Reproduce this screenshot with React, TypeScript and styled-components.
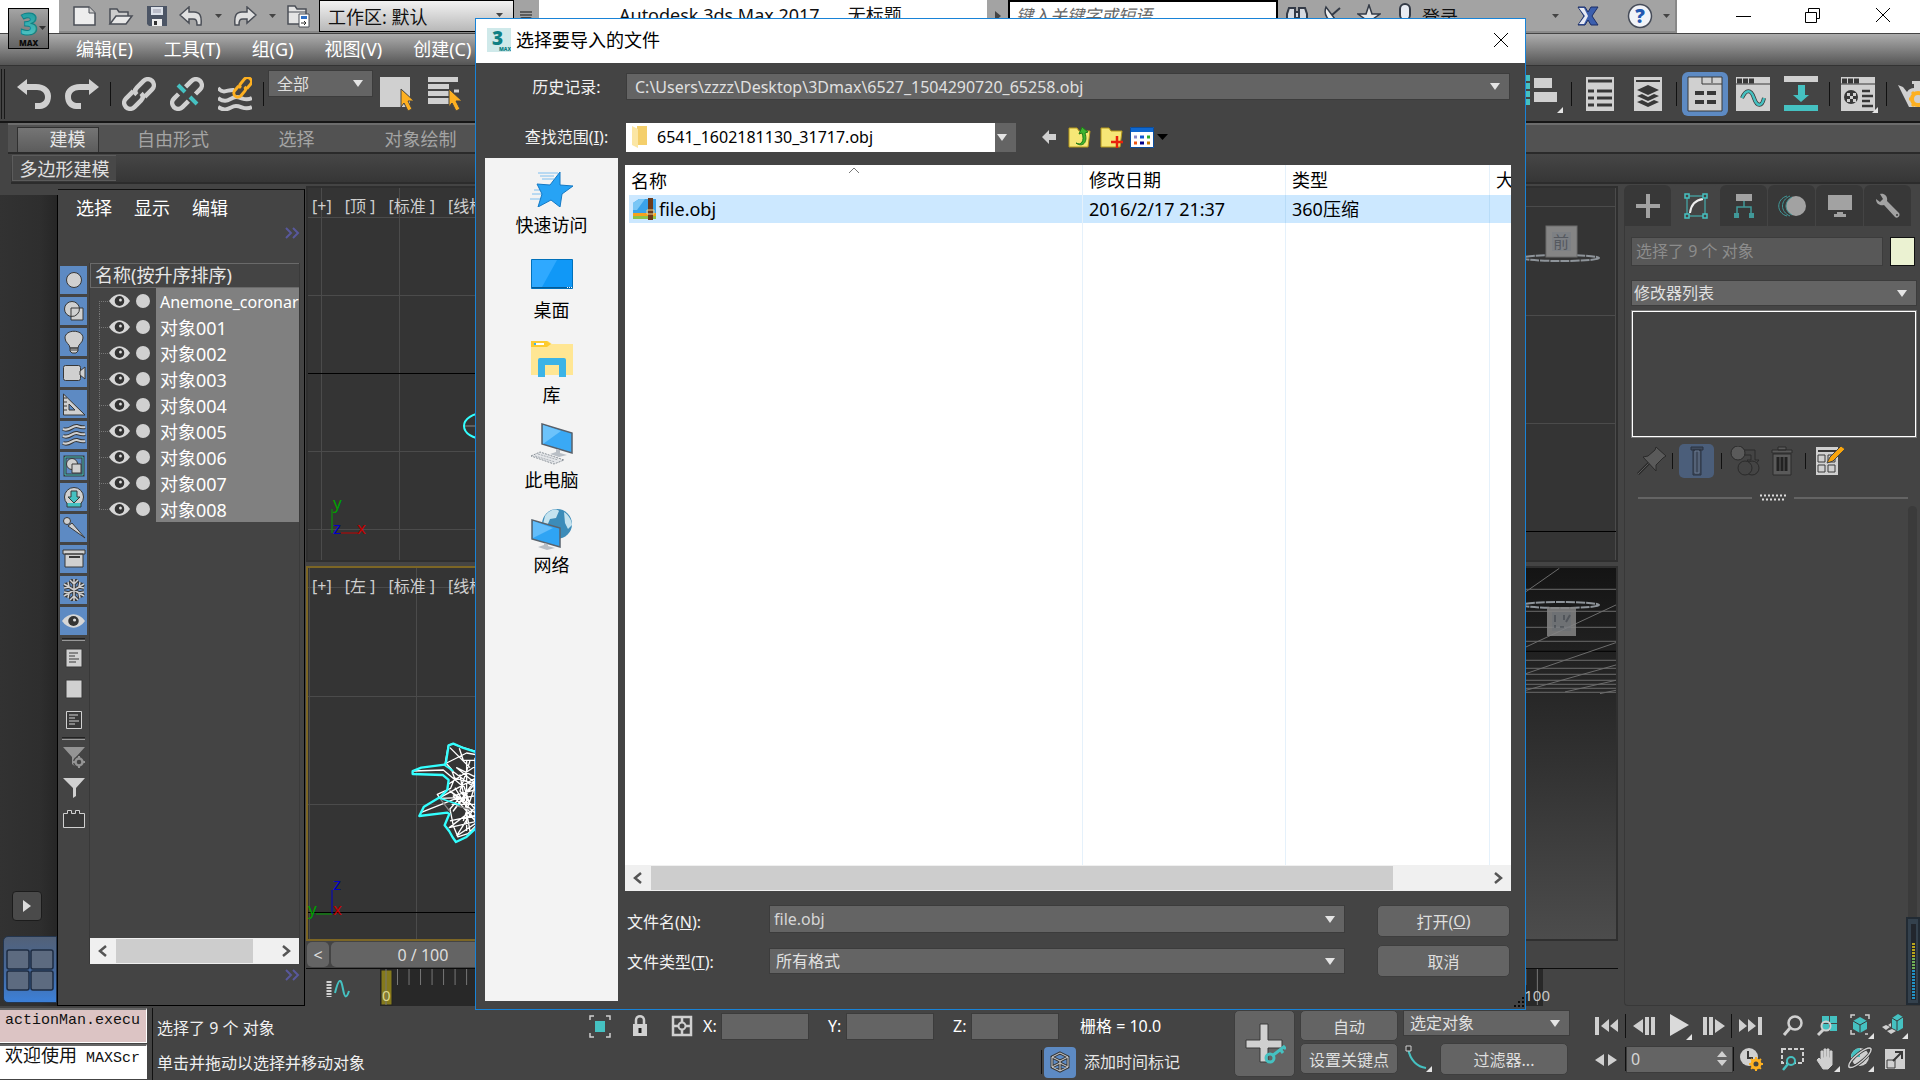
import React from "react";
import styled, { createGlobalStyle, css } from "styled-components";

const LIGHT = "#d0d0d0";
const CYAN = "#45c1c1";
const ORANGE = "#fdb021";
const FACE = "#444444";
const FIELD = "#646464";
const INK = "#383838";

const Global = createGlobalStyle`
  * { box-sizing: border-box; }
  body { margin: 0; background: ${FACE}; overflow: hidden; }
  body, button, input, select, textarea {
    font-family: "Noto Sans", "Noto Sans CJK SC", sans-serif;
  }
  button { margin: 0; padding: 0; border: 0; background: none; color: inherit; font-size: inherit; }
  svg { display: block; flex: none; }
`;

/* ---------- shared parts ---------- */

const Shell = styled.div`
  position: relative;
  display: flex;
  flex-direction: column;
  min-height: 100vh;
  background: ${FACE};
  color: #e6e6e6;
  font-size: 16px;
  line-height: 24px;
  white-space: nowrap;
`;

const Stack = styled.div<{ $w?: number; $grow?: boolean }>`
  display: grid;
  align-items: center;
  flex: ${(p) => (p.$grow ? "1" : "none")};
  width: ${(p) => (p.$w ? `${p.$w}px` : "auto")};
  min-width: 0;
  > * { grid-area: 1 / 1; }
  > svg { justify-self: end; pointer-events: none; }
`;

const Select = styled.select<{ $h?: number; $pad?: number; $size?: number }>`
  appearance: none;
  width: 100%;
  height: ${(p) => p.$h ?? 26}px;
  padding: 0 28px 0 ${(p) => p.$pad ?? 9}px;
  border: 1px solid #3c3c3c;
  border-radius: 0;
  background: ${FIELD};
  color: #e0e0e0;
  font-size: ${(p) => p.$size ?? 16}px;
`;

const Field = styled.input<{ $h?: number; $dim?: boolean; $size?: number }>`
  width: 100%;
  min-width: 0;
  height: ${(p) => p.$h ?? 26}px;
  padding: 0 4px ${(p) => (p.$dim ? 4 : 0)}px;
  border: 1px solid #3c3c3c;
  background: ${(p) => (p.$dim ? "#585858" : FIELD)};
  color: ${(p) => (p.$dim ? "#8c8c8c" : "#d6d6d6")};
  font-size: ${(p) => p.$size ?? 16}px;
`;

const PushButton = styled.button`
  display: flex;
  align-items: center;
  justify-content: center;
  height: 32px;
  border: 1px solid #3e3e3e;
  border-radius: 5px;
  background: ${FIELD};
  color: #dedede;
  font-size: 16px;
`;

const Down = ({ pad = 10 }: { pad?: number }) => (
  <svg width={10 + pad} height="9" viewBox={`0 0 ${10 + pad} 9`}>
    <path d="M0 1h10l-5 7z" fill="#e4e4e4" />
  </svg>
);

const Sep = styled.i<{ $h?: number }>`
  flex: none;
  width: 1px;
  height: ${(p) => p.$h ?? 24}px;
  background: #111;
`;

type IconProps = { w: number; h: number; children: React.ReactNode };
const Icon = ({ w, h, children }: IconProps) => (
  <svg width={w} height={h} viewBox={`0 0 ${w} ${h}`} fill="none" aria-hidden="true">
    {children}
  </svg>
);

/* ---------- title bar ---------- */

const TitleBar = styled.header`
  display: flex;
  height: 34px;
  background: #fff;
  color: #111;
  font-size: 18px;
  border-bottom: 1px solid #444;
`;
const AppSlot = styled.div`
  width: 59px;
  padding: 8px 0 0 8px;
  flex: none;
`;
const AppButton = styled.button`
  position: relative;
  z-index: 1;
  display: block;
  width: 41px;
  height: 41px;
  border: 1px solid #000;
  background: linear-gradient(#a4a4a4, #636363);
`;
const QuickAccess = styled.div`
  display: flex;
  align-items: center;
  flex: none;
  width: 480px;
  padding-left: 13px;
  background: #a3a3a3;
  border-bottom: 2px solid #8a8a8a;
`;
const QuickButton = styled.button<{ $w: number }>`
  display: flex;
  align-items: center;
  justify-content: center;
  flex: none;
  width: ${(p) => p.$w}px;
  height: 30px;
`;
const Workspace = styled(Select)`
  padding-top: 2px;
  border: 1px solid #000;
  background: linear-gradient(#f2f2f2, #b8b8b8);
  color: #111;
`;
const Caption = styled.h1`
  display: flex;
  gap: 28px;
  flex: 1;
  margin: 0;
  padding: 3px 0 0 80px;
  font-size: 18px;
  font-weight: 400;
`;
const InfoCenter = styled.div`
  display: flex;
  align-items: center;
  flex: none;
  width: 690px;
  background: #a3a3a3;
  border-right: 2px solid #888;
  border-bottom: 2px solid #8a8a8a;
`;
const SearchBox = styled.input`
  flex: none;
  width: 270px;
  height: 32px;
  padding: 0 6px;
  border: 2px solid #000;
  background: #fff;
  font-size: 17px;
  font-style: italic;
  &::placeholder { color: #666; opacity: 1; }
`;
const SignIn = styled.button`
  width: 130px;
  text-align: left;
  font-size: 18px;
`;
const WindowButtons = styled.div`
  display: flex;
  flex: none;
  width: 243px;
  justify-content: space-between;
  padding: 0 22px 0 51px;
`;

const smallDown = <path d="M0 0h7l-3.500 4z" fill="#444" />;

function TitleIcons() {
  return (
    <QuickAccess>
      <QuickButton $w={26} aria-label="新建">
        <Icon w={26} h={22}><path d="M2 2h15l6 6v12H2z" fill="#ededed" stroke="#4b4f57" strokeWidth="1.500" /><path d="M17 2v6h6" stroke="#4b4f57" fill="#ccc" /></Icon>
      </QuickButton>
      <QuickButton $w={46} aria-label="打开">
        <Icon w={26} h={20}><path d="M2 18V3h7l2 3h9v4" fill="#ccc" stroke="#4b4f57" strokeWidth="1.500" /><path d="M2 18l6-8h16l-6 8z" fill="#e8e8e8" stroke="#4b4f57" strokeWidth="1.500" /></Icon>
      </QuickButton>
      <QuickButton $w={26} aria-label="保存">
        <Icon w={22} h={22}><path d="M1 1h20v20H3l-2-2z" fill="#4c5565" /><path d="M5 2h12v8H5z" fill="#dde2ea" /><path d="M6 14h10v7H6z" fill="#eee" /><path d="M8 16h3v4H8z" fill="#333" /><path d="M7 5h8M7 7h8" stroke="#99a" /></Icon>
      </QuickButton>
      <QuickButton $w={42} aria-label="撤消">
        <Icon w={24} h={20}><path d="M1 9l9-8v5h5c6 0 8 4 7 13h-4c0-5-1-6-4-6h-4v4z" fill="#e0e0e0" stroke="#4b4f57" strokeWidth="1.500" /></Icon>
      </QuickButton>
      <QuickButton $w={12} aria-label="撤消列表"><Icon w={7} h={4}>{smallDown}</Icon></QuickButton>
      <QuickButton $w={42} aria-label="重做">
        <Icon w={24} h={20}><path d="M23 9l-9-8v5H9C3 6 1 10 2 19h4c0-5 1-6 4-6h4v4z" fill="#e0e0e0" stroke="#4b4f57" strokeWidth="1.500" /></Icon>
      </QuickButton>
      <QuickButton $w={12} aria-label="重做列表"><Icon w={7} h={4}>{smallDown}</Icon></QuickButton>
      <QuickButton $w={41} aria-label="项目文件夹">
        <Icon w={25} h={24}><path d="M2 20V2h7l2 3h9v15z" fill="#e4e4e4" stroke="#4b4f57" strokeWidth="1.500" /><path d="M2 8h18" stroke="#4b4f57" /><path d="M13 10h10v13H13z" fill="#fff" stroke="#4b4f57" /><path d="M15 12h6v3h-6z" fill="#2f6fc4" /><path d="M15 19h5m-2-2l2 2-2 2" stroke="#333" /></Icon>
      </QuickButton>
      <Stack $w={195}>
        <Workspace $h={32} $size={18} $pad={8} aria-label="工作区"><option>工作区: 默认</option></Workspace>
        <Icon w={18} h={5}>{smallDown}</Icon>
      </Stack>
      <QuickButton $w={24} aria-label="自定义"><Icon w={12} h={10}><path d="M0 1h12M0 4h12" stroke="#444" strokeWidth="1.500" /><path d="M0 6h12l-6 4z" fill="#444" /></Icon></QuickButton>
    </QuickAccess>
  );
}

function Title() {
  return (
    <TitleBar>
      <AppSlot>
        <AppButton aria-label="应用程序菜单">
          <svg width="39" height="39" viewBox="0 0 39 39">
            <defs><linearGradient id="teal" x1="0" y1="0" x2="0" y2="1"><stop offset="0" stopColor="#0f8e92" /><stop offset="1" stopColor="#5fd0cf" /></linearGradient></defs>
            <text x="11" y="26" fontFamily="Noto Sans" fontWeight="900" fontSize="30" fill="url(#teal)" stroke="#0d8185">3</text>
            <text x="10" y="37" fontFamily="Open Sans, sans-serif" fontWeight="800" fontSize="8" fill="#0b0b0b">MAX</text>
            <path d="M30 17h7l-3.500 4z" fill="#333" />
          </svg>
        </AppButton>
      </AppSlot>
      <TitleIcons />
      <Caption><span>Autodesk 3ds Max 2017</span><span>无标题</span></Caption>
      <InfoCenter>
        <QuickButton $w={21} aria-label="收拢"><Icon w={8} h={12}><path d="M1 1l6 5-6 5z" fill="#444" /></Icon></QuickButton>
        <SearchBox placeholder="键入关键字或短语" aria-label="搜索" />
        <QuickButton $w={38} aria-label="查找"><Icon w={22} h={22}><path d="M3 3h6v17H1V9zM13 3h6l2 6v11h-8zM9 7h4v6H9z" fill="#d5d9df" stroke="#333a46" strokeWidth="2" /></Icon></QuickButton>
        <QuickButton $w={34} aria-label="通讯中心"><Icon w={20} h={22}><path d="M3 2c-3 8 2 15 12 16z" fill="#eee" stroke="#333a46" strokeWidth="1.500" /><path d="M9 10l8-7" stroke="#333a46" strokeWidth="2" /></Icon></QuickButton>
        <QuickButton $w={38} aria-label="收藏夹"><Icon w={24} h={24}><path d="M12 1l3 9h8l-7 5 3 8-7-5-7 5 3-8-7-5h8z" fill="#e8e8e8" stroke="#333a46" strokeWidth="1.500" /></Icon></QuickButton>
        <QuickButton $w={34} aria-label="用户"><Icon w={14} h={26}><rect x="2" y="1" width="10" height="16" rx="5" fill="#e8ecf3" stroke="#333a46" strokeWidth="2" /></Icon></QuickButton>
        <SignIn>登录</SignIn>
        <Icon w={7} h={4}>{smallDown}</Icon>
        <QuickButton $w={58} aria-label="Exchange 应用程序"><Icon w={22} h={20}><path d="M1 1h7l3 5 3-5h7l-6 9 6 9h-7l-3-5-3 5H1l6-9z" fill="#3c5fae" stroke="#1d2f66" /><path d="M2 2h5l4 8-4 8H2l6-8z" fill="#e7e9f2" /></Icon></QuickButton>
        <QuickButton $w={46} aria-label="帮助">
          <svg width="26" height="26" viewBox="0 0 26 26"><circle cx="13" cy="13" r="11.500" fill="#f1f3f8" stroke="#454b58" strokeWidth="1.500" /><text x="13" y="20" textAnchor="middle" fontFamily="Noto Sans" fontWeight="900" fontSize="19" fill="#2458b0">?</text></svg>
        </QuickButton>
        <Icon w={9} h={4}>{smallDown}</Icon>
      </InfoCenter>
      <WindowButtons>
        <QuickButton $w={30} aria-label="最小化"><Icon w={15} h={15}><path d="M0 8.500h15" stroke="#000" /></Icon></QuickButton>
        <QuickButton $w={30} aria-label="还原"><Icon w={16} h={16}><path d="M.5 5.500h11v10H.5zM3.500 5V1.500h11v10H12" stroke="#000" /></Icon></QuickButton>
        <QuickButton $w={30} aria-label="关闭"><Icon w={16} h={16}><path d="M1 1l14 14M15 1L1 15" stroke="#000" /></Icon></QuickButton>
      </WindowButtons>
    </TitleBar>
  );
}

/* ---------- menu, toolbar, ribbon ---------- */

const MenuBar = styled.nav`
  display: flex;
  align-items: center;
  gap: 31px;
  height: 32px;
  padding: 0 0 2px 76px;
  background: linear-gradient(#adadad, #555);
  border-bottom: 1px solid #333;
  color: #fff;
  font-size: 18px;
`;

const Toolbar = styled.div`
  display: flex;
  align-items: center;
  height: 57px;
  overflow: hidden;
  border-bottom: 2px solid #161616;
`;
const Grip = styled.i`
  width: 4px;
  height: 50px;
  margin: 0 5px 0 1px;
  border: solid #191919;
  border-width: 0 1px;
  flex: none;
`;
const Tool = styled.button<{ $cut?: boolean }>`
  display: flex;
  align-items: center;
  justify-content: ${(p) => (p.$cut ? "flex-start" : "center")};
  flex: none;
  width: ${(p) => (p.$cut ? 29 : 48)}px;
  padding-left: ${(p) => (p.$cut ? 7 : 0)}px;
  height: 46px;
  overflow: hidden;
`;
const OnTool = styled.span`
  display: grid;
  place-items: center;
  width: 46px;
  height: 44px;
  border-radius: 6px;
  background: #5d8ac3;
`;
const ToolSep = styled(Sep)`
  margin: 0 4px;
`;
const FilterStack = styled(Stack)`
  align-self: flex-start;
  margin-top: 4px;
`;
const Spacer = styled.div`
  flex: 1;
`;

function MainToolbar() {
  return (
    <Toolbar>
      <Grip />
      <Tool aria-label="撤消"><Icon w={34} h={32}><path d="M0 9L10 1v5h9c9 0 15 5 15 12 0 8-5 13-11 13h-5v-6h3c4 0 7-2 7-6s-3-7-8-7H10v5z" fill={LIGHT} /></Icon></Tool>
      <Tool aria-label="重做"><Icon w={34} h={32}><path d="M34 9L24 1v5h-9C6 6 0 11 0 18c0 8 5 13 11 13h5v-6h-3c-4 0-7-2-7-6s3-7 8-7h10v5z" fill={LIGHT} /></Icon></Tool>
      <ToolSep />
      <Tool aria-label="选择并链接"><Icon w={34} h={34}><g transform="rotate(-45 17 17)" stroke={LIGHT} strokeWidth="4.500"><path d="M15 11H4.500a6 6 0 0 0 0 12H14q5 0 5-5M19 23h10.500a6 6 0 0 0 0-12H20q-5 0-5 5" /></g></Icon></Tool>
      <Tool aria-label="取消链接"><Icon w={34} h={34}><g transform="rotate(-45 17 17)" stroke={LIGHT} strokeWidth="4.500"><path d="M11 11H4.500a6 6 0 0 0 0 12H13M23 23h6.500a6 6 0 0 0 0-12H21" /></g><path d="M8 8l7 7M20 20l7 7" stroke={CYAN} strokeWidth="4" /></Icon></Tool>
      <Tool aria-label="绑定到空间扭曲"><Icon w={34} h={34}><path d="M0 11c6 7 10 1 16 2M0 21c9 7 12-1 18-1 6 0 9 5 16 1M0 30c9 6 12-1 18-1 6 0 9 5 16 1" stroke={LIGHT} strokeWidth="4" /><g transform="rotate(-50 25 10)" stroke={ORANGE} strokeWidth="3"><path d="M23 6h-6a4 4 0 0 0 0 8h6q3 0 3-3M26 14h6a4 4 0 0 0 0-8h-6q-3 0-3 3" /></g></Icon></Tool>
      <ToolSep />
      <FilterStack $w={105}>
        <Select $h={27} $pad={8} aria-label="选择过滤器"><option>全部</option></Select>
        <Down />
      </FilterStack>
      <Tool aria-label="选择对象"><Icon w={34} h={34}><path d="M0 0h30v30H0z" fill={LIGHT} /><path d="M21 12l13 12h-6l4 8-4 2-4-8-3 4z" fill={ORANGE} stroke={FACE} /></Icon></Tool>
      <Tool aria-label="按名称选择"><Icon w={34} h={34}><path d="M0 0h30v5H0zM0 7h21v5H0zM0 14h21v5H0zM0 21h21v6H0z" fill={LIGHT} /><path d="M26 14h5" stroke={LIGHT} strokeWidth="3" /><path d="M21 12l13 12h-6l4 8-4 2-4-8-3 4z" fill={ORANGE} stroke={FACE} /></Icon></Tool>
      <Spacer />
      <Tool aria-label="对齐"><Icon w={40} h={38}><path d="M5 0v32" stroke={CYAN} strokeWidth="4" strokeDasharray="6 2" /><path d="M11 3h18v10H11zM11 17h23v10H11z" fill={LIGHT} /><path d="M40 32v6h-6z" fill="#e4e4e4" /></Icon></Tool>
      <ToolSep />
      <Tool aria-label="场景资源管理器"><Icon w={28} h={34}><path d="M0 0h28v34H0z" fill={LIGHT} /><path d="M2 4h24M2 14h6M11 14h15M2 21h6M11 21h15M2 28h6M11 28h15" stroke={INK} strokeWidth="3" /></Icon></Tool>
      <Tool aria-label="层资源管理器"><Icon w={28} h={34}><path d="M0 0h28v34H0z" fill={LIGHT} /><path d="M2 4h24" stroke={INK} strokeWidth="2" /><path d="M14 8l11 5-11 5-11-5zM3 19l5-2 6 3 6-3 5 2-11 5zM3 25l5-2 6 3 6-3 5 2-11 5z" fill={INK} /></Icon></Tool>
      <ToolSep />
      <Tool aria-label="功能区"><OnTool><Icon w={36} h={36}><path d="M1 1h34v34H1z" fill={LIGHT} stroke={INK} /><path d="M15 1v7h20M25 1v6" stroke={INK} /><path d="M8 17h9M20 17h9M8 26h9M20 26h9" stroke={INK} strokeWidth="4" /></Icon></OnTool></Tool>
      <Tool aria-label="曲线编辑器"><Icon w={34} h={34}><path d="M0 0h34v34H0z" fill={LIGHT} /><path d="M1 4h5M7 4h5M13 4h5" stroke={INK} strokeWidth="5" /><path d="M0 7h34" stroke={INK} /><path d="M6 21c4-9 9-9 12 0s8 9 10 0" stroke={INK} strokeWidth="4" /><path d="M6 21c4-9 9-9 12 0s8 9 10 0" stroke={CYAN} strokeWidth="2.500" /></Icon></Tool>
      <Tool aria-label="图解视图"><Icon w={34} h={36}><path d="M0 0h34v6H0z" fill={LIGHT} /><path d="M0 29h34v6H0z" fill={CYAN} /><path d="M14 9h7v10h4l-8 7-8-7h5z" fill={CYAN} /></Icon></Tool>
      <ToolSep />
      <Tool aria-label="材质编辑器"><Icon w={40} h={38}><path d="M3 2h34v34H3z" fill={LIGHT} /><path d="M4 6h5M10 6h5M16 6h5" stroke={INK} strokeWidth="5" /><path d="M3 9h34" stroke={INK} /><circle cx="13" cy="22" r="7" fill={INK} /><path d="M9 18h3v3H9zM15 18h3v3h-3zM12 21h3v3h-3zM9 24h3v3H9zM15 24h3v3h-3z" fill={LIGHT} /><path d="M24 16h8M24 21h11M24 26h8M24 31h11" stroke={INK} strokeWidth="2.500" /><path d="M40 32v6h-6z" fill="#e4e4e4" /></Icon></Tool>
      <ToolSep />
      <Tool $cut aria-label="渲染设置"><Icon w={22} h={30}><path d="M0 6l5 2 4 5c2-3 4-4 7-4V5h-2V2h8v26H11C7 20 3 12 0 6z" fill={LIGHT} /><circle cx="20" cy="20" r="6" stroke={ORANGE} strokeWidth="4" /><path d="M11 20h3M14 13l2 2M14 27l2-2" stroke={ORANGE} strokeWidth="3" /></Icon></Tool>
    </Toolbar>
  );
}

const RibbonTabs = styled.div`
  display: flex;
  align-items: flex-end;
  height: 31px;
  margin-left: 8px;
  border-top: 2px solid #6c6c6c;
  border-bottom: 2px solid #2a2a2a;
  background: #525252;
  color: #a4a4a4;
  font-size: 18px;
`;
const RibbonTab = styled.button<{ $w: number; $on?: boolean }>`
  width: ${(p) => p.$w}px;
  height: 25px;
  padding-bottom: 2px;
  line-height: 22px;
  text-align: center;
  ${(p) => p.$on && css`
    margin-left: 9px;
    padding-left: 19px;
    border: 1px solid #303030;
    border-bottom: 0;
    background: linear-gradient(#757575, #5c5c5c);
    color: #e6e6e6;
  `}
`;
const RibbonPanel = styled.div`
  display: flex;
  height: 30px;
  margin-left: 11px;
  padding: 1px;
  background: linear-gradient(#464646, #363636);
  border-bottom: 2px solid #2c2c2c;
`;
const RibbonButton = styled.button`
  width: 104px;
  border: 1px solid #5c5c5c;
  border-right: 0;
  background: #484848;
  color: #e0e0e0;
  font-size: 18px;
  line-height: 26px;
`;

/* ---------- scene explorer ---------- */

const Main = styled.main`
  display: flex;
  flex: 1;
`;
const Strip = styled.aside`
  display: flex;
  flex-direction: column;
  justify-content: flex-end;
  flex: none;
  width: 58px;
  margin-top: 11px;
  padding-bottom: 3px;
  border-right: 1px solid #000;
  background: linear-gradient(90deg, #323232, #2e2e2e 70%, #262626);
`;
const PlayBtn = styled.button`
  display: grid;
  place-items: center;
  width: 30px;
  height: 30px;
  margin: 0 0 15px 12px;
  border: 1px solid #1c1c1c;
  border-radius: 4px;
  background: #4a4a4a;
`;
const LayoutBtn = styled.button`
  display: grid;
  place-items: center;
  height: 67px;
  margin-left: 3px;
  border: 1px solid #24364f;
  border-radius: 5px 0 0 5px;
  background: linear-gradient(#526178, #46689a 50%, #3c80d8);
`;
const Explorer = styled.section`
  display: flex;
  flex-direction: column;
  flex: none;
  width: 247px;
  margin-top: 5px;
  border-top: 1px solid #111;
  border-right: 1px solid #000;
  border-bottom: 1px solid #000;
`;
const ExplorerMenu = styled.nav`
  display: flex;
  gap: 22px;
  padding: 6px 0 0 18px;
  color: #fff;
  font-size: 18px;
`;
const More = styled.button<{ $last?: boolean }>`
  align-self: flex-end;
  height: 18px;
  margin: ${(p) => (p.$last ? "2px 4px 21px 0" : "4px 4px 0 0")};
`;
const ExplorerBody = styled.div`
  display: flex;
  flex: 1;
  margin-top: 21px;
`;
const FilterColumn = styled.div`
  display: flex;
  flex-direction: column;
  gap: 3px;
  width: 29px;
  padding: 3px 0 0 2px;
`;
const FilterButton = styled.button<{ $on?: boolean }>`
  display: grid;
  place-items: center;
  width: 27px;
  height: 28px;
  background: ${(p) => (p.$on ? "#5d8ac3" : "transparent")};
`;
const FilterRule = styled.hr`
  width: 23px;
  height: 3px;
  margin: 0 2px;
  border: 0;
  border-top: 1px solid #222;
  border-bottom: 1px solid #999;
`;
const SceneColumn = styled.div`
  display: flex;
  flex-direction: column;
  flex: 1;
  min-width: 0;
  margin: 0 4px 0 2px;
  border-left: 1px solid #383838;
  border-right: 1px solid #3a3a3a;
`;
const SceneHeader = styled.div`
  height: 25px;
  padding-left: 4px;
  border: 1px solid #6a6a6a;
  border-right: 0;
  font-size: 18px;
  line-height: 22px;
`;
const SceneList = styled.ul`
  flex: 1;
  margin: 0;
  padding: 0;
  list-style: none;
`;
const SceneRow = styled.li`
  display: flex;
  align-items: center;
  height: 26px;
  padding-left: 9px;
`;
const SceneName = styled.span<{ $latin: boolean }>`
  flex: 1;
  height: 26px;
  margin-left: 5px;
  padding-left: 4px;
  overflow: hidden;
  background: #808080;
  color: #fff;
  font-size: ${(p) => (p.$latin ? 16 : 18)}px;
  line-height: 28px;
`;
const ScrollBar = styled.div`
  display: flex;
  align-items: center;
  height: 26px;
  flex: none;
  background: #f0f0f0;
`;
const ScrollArrow = styled.button`
  display: grid;
  place-items: center;
  flex: none;
  width: 26px;
  height: 24px;
`;
const Track = styled.div`
  flex: 1;
  height: 24px;
`;
const Thumb = styled.div`
  height: 100%;
  background: #cdcdcd;
`;

const Chevron = ({ right }: { right?: boolean }) => (
  <Icon w={10} h={12}><path d={right ? "M2 1l6 5-6 5" : "M8 1L2 6l6 5"} stroke="#555" strokeWidth="2.500" /></Icon>
);
const Scroll = ({ share }: { share: number }) => (
  <ScrollBar>
    <ScrollArrow aria-label="向左滚动"><Chevron /></ScrollArrow>
    <Track><Thumb style={{ width: `${share}%` }} /></Track>
    <ScrollArrow aria-label="向右滚动"><Chevron right /></ScrollArrow>
  </ScrollBar>
);

const Eye = ({ w = 21 }: { w?: number }) => (
  <svg width={w} height="14" viewBox="0 0 22 14" preserveAspectRatio="none" aria-hidden="true">
    <path d="M0 7c6-9 16-9 22 0-6 9-16 9-22 0z" fill="#d6d6d6" />
    <circle cx="11" cy="7" r="5" fill="#333" /><circle cx="12" cy="6" r="1.500" fill="#ddd" />
  </svg>
);

const S = { fill: LIGHT, stroke: INK };
const filters: [string, React.ReactNode][] = [
  ["几何体", <Icon w={24} h={24}><circle cx="12" cy="12" r="7.500" {...S} /></Icon>],
  ["图形", <Icon w={24} h={24}><circle cx="10" cy="10" r="7.500" {...S} /><path d="M9 9h12v12H9z" {...S} /><path d="M9 17.400A7.500 7.500 0 0 0 17.400 9" stroke={INK} /></Icon>],
  ["灯光", <Icon w={24} h={24}><path d="M8 18c0-4-5-5-5-10 0-9 18-9 18 0 0 5-5 6-5 10zM8 18h8v3l-2 2h-4l-2-2zM8 20h8" {...S} /></Icon>],
  ["摄影机", <Icon w={24} h={24}><rect x="1.500" y="4.500" width="17" height="15" rx="2" {...S} /><path d="M18 10l5-4v12l-5-4z" {...S} /></Icon>],
  ["辅助对象", <Icon w={24} h={24}><path d="M1.500 2v21H23z" {...S} /><path d="M7 12v6h6z" fill="#5d8ac3" stroke={INK} /><path d="M2 6h3M2 10h3M2 14h3M2 18h3" stroke={INK} /></Icon>],
  ["空间扭曲", <Icon w={24} h={24}><path d="M1 6c7 3 9-4 14-3 3 1 5 2 8 1M1 13c7 3 9-4 14-3 3 1 5 2 8 1M1 20c7 3 9-4 14-3 3 1 5 2 8 1" stroke={INK} strokeWidth="4" /><path d="M1 6c7 3 9-4 14-3 3 1 5 2 8 1M1 13c7 3 9-4 14-3 3 1 5 2 8 1M1 20c7 3 9-4 14-3 3 1 5 2 8 1" stroke={LIGHT} strokeWidth="2" /></Icon>],
  ["组", <Icon w={24} h={24}><path d="M3 3h18v18H3z" stroke={INK} strokeWidth="3" /><path d="M3 3h18v18H3z" stroke={CYAN} /><circle cx="10" cy="10" r="5.500" {...S} /><path d="M10 10h9v9h-9z" {...S} /></Icon>],
  ["外部参照", <Icon w={24} h={24}><circle cx="12" cy="12" r="9.500" {...S} /><path d="M9 6h6v6h3l-6 6-6-6h3zM5 18v4h14v-4" fill={CYAN} stroke={INK} /></Icon>],
  ["骨骼", <Icon w={24} h={24}><circle cx="5" cy="5" r="3.500" {...S} /><path d="M6 10l4-3 13 15z" {...S} /></Icon>],
  ["容器", <Icon w={24} h={24}><path d="M3 7h18v13H3zM1 3h22v4H1z" {...S} /><path d="M7 10h11" stroke={INK} strokeWidth="2" /></Icon>],
  ["冻结对象", <Icon w={24} h={24}><path d="M12 1v22M2 6l20 12M22 6L2 18M8 2l4 4 4-4M8 22l4-4 4 4M2 10l5-1-1-5M22 10l-5-1 1-5M2 14l5 1-1 5M22 14l-5 1 1 5" stroke={INK} strokeWidth="3.500" /><path d="M12 1v22M2 6l20 12M22 6L2 18M8 2l4 4 4-4M8 22l4-4 4 4M2 10l5-1-1-5M22 10l-5-1 1-5M2 14l5 1-1 5M22 14l-5 1 1 5" stroke={LIGHT} strokeWidth="1.500" /></Icon>],
  ["隐藏对象", <Eye w={23} />],
];
const modes: [string, React.ReactNode][] = [
  ["全部显示", <Icon w={18} h={20}><path d="M1 1h16v18H1z" {...S} /><path d="M4 5h9M4 8h6M4 11h10M4 14h7" stroke={INK} /></Icon>],
  ["不显示", <Icon w={18} h={20}><path d="M1 1h16v18H1z" {...S} /></Icon>],
  ["反选", <Icon w={18} h={20}><path d="M1.500 1.500h15v17h-15z" fill={INK} stroke={LIGHT} /><path d="M4 5h9M4 8h6M4 11h10M4 14h6" stroke={LIGHT} /></Icon>],
];
const tails: [string, React.ReactNode][] = [
  ["过滤器设置", <Icon w={24} h={24}><path d="M1 2h22l-9 10v10l-4-3v-7z" fill="#949494" /><circle cx="17" cy="17" r="6" fill={FACE} /><circle cx="17" cy="17" r="3.500" stroke="#949494" strokeWidth="2.500" /><path d="M17 11v12M11 17h12" stroke="#949494" strokeDasharray="2 8" strokeWidth="2" /></Icon>],
  ["过滤器", <Icon w={24} h={24}><path d="M1 2h22l-9 10v8l-3 2V12z" fill={LIGHT} /></Icon>],
  ["集合", <Icon w={24} h={24}><path d="M1.500 20.500v-14h4v-3h4v3h4v-3h4v3h5v14z" fill={INK} stroke={LIGHT} /></Icon>],
];
const objects = ["Anemone_coronaria", ...[1, 2, 3, 4, 5, 6, 7, 8].map((n) => `对象00${n}`)];

const moreIcon = <Icon w={15} h={12}><path d="M1 1l5 5-5 5M8 1l5 5-5 5" stroke="#58589c" strokeWidth="2" /></Icon>;

function SceneExplorer() {
  return (
    <Explorer>
      <ExplorerMenu><span>选择</span><span>显示</span><span>编辑</span></ExplorerMenu>
      <More aria-label="更多">{moreIcon}</More>
      <ExplorerBody>
        <FilterColumn>
          {filters.map(([n, i]) => <FilterButton key={n} $on aria-label={n}>{i}</FilterButton>)}
          <FilterRule />
          {modes.map(([n, i]) => <FilterButton key={n} aria-label={n}>{i}</FilterButton>)}
          <FilterRule />
          {tails.map(([n, i]) => <FilterButton key={n} aria-label={n}>{i}</FilterButton>)}
        </FilterColumn>
        <SceneColumn>
          <SceneHeader>名称(按升序排序)</SceneHeader>
          <SceneList>
            {objects.map((o, i) => (
              <SceneRow key={o}>
                <Icon w={10} h={26}><path d={i === 0 ? "M.5 13v13M0 13.500h9" : i === 8 ? "M.5 0v13M0 13.500h9" : "M.5 0v26M0 13.500h9"} stroke="#777" strokeDasharray="1 1" /></Icon>
                <Eye />
                <Icon w={21} h={16}><circle cx="13" cy="8" r="7" fill={LIGHT} /></Icon>
                <SceneName $latin={i === 0}>{o}</SceneName>
              </SceneRow>
            ))}
          </SceneList>
          <Scroll share={87} />
        </SceneColumn>
      </ExplorerBody>
      <More $last aria-label="更多列">{moreIcon}</More>
    </Explorer>
  );
}

/* ---------- viewports ---------- */

const Center = styled.section`
  display: flex;
  flex-direction: column;
  flex: 1;
  min-width: 0;
  padding: 2px 0 0 1px;
`;
const Views = styled.div`
  display: grid;
  flex: 1;
  grid-template: 1fr 1fr / 1fr 1fr;
  gap: 4px;
`;
const View = styled.div<{ $active?: boolean; $persp?: boolean }>`
  display: grid;
  overflow: hidden;
  min-width: 0;
  border: 2px solid ${(p) => (p.$active ? "#7c6625" : "#2f2f2f")};
  background: ${(p) => (p.$persp ? "linear-gradient(#141414, #4c4c4c)" : "#343434")};
  > * { grid-area: 1 / 1; }
`;
const ViewLabel = styled.div`
  display: flex;
  gap: 13px;
  align-self: start;
  padding: 6px 0 0 4px;
  color: #cfcfcf;
  font-size: 16px;
`;
const RightArt = styled.svg`
  justify-self: end;
`;

const Grid = ({ xs, ys, zero }: { xs: number[]; ys: number[]; zero: number }) => (
  <g shapeRendering="crispEdges">
    {xs.map((x) => <line key={x} x1={x} x2={x} y1="0" y2="100%" stroke="#4b4b4b" />)}
    {ys.map((y) => <line key={y} y1={y} y2={y} x1="0" x2="100%" stroke="#4b4b4b" />)}
    <line y1={zero} y2={zero} x1="0" x2="100%" stroke="#000" />
  </g>
);
const axis = { fontFamily: "Noto Sans", fontSize: 17 };
const Cube = () => <rect width="31" height="31" fill="#858585" stroke="#6d6d6d" />;

function Viewports() {
  return (
    <Views>
      <View>
        <svg width="100%" height="100%">
          <Grid xs={[13, 91, 169, 247]} ys={[29, 107, 263, 341]} zero={185} />
          <path d="M24 345v-24" stroke="#00a000" /><path d="M33 345h17" stroke="#c00000" />
          <g {...axis}><text x="25" y="321" fill="#00a000">y</text><text x="25" y="346" fill="#0000c8">z</text><text x="49" y="346" fill="#c00000">x</text></g>
          <ellipse cx="176" cy="238" rx="20" ry="13" stroke="#3ff" strokeWidth="2" fill="none" />
          <path d="M157 238h10" stroke="#888" />
        </svg>
        <ViewLabel><span>[+]</span><span>[顶 ]</span><span>[标准 ]</span><span>[线框 ]</span></ViewLabel>
      </View>
      <View>
        <RightArt width="200" height="100%">
          <Grid xs={[199]} ys={[18, 127, 235]} zero={343} />
          <ellipse cx="145" cy="70" rx="38" ry="3" stroke="#8e949a" strokeWidth="2" strokeDasharray="9 1" fill="none" />
          <g transform="translate(130 38)"><Cube /><rect x="6" y="6" width="19" height="19" fill="#7d8084" /><text x="15" y="22" textAnchor="middle" fontSize="16" fontFamily="Noto Sans CJK SC" fill="#55595f">前</text></g>
        </RightArt>
      </View>
      <View $active>
        <svg width="100%" height="100%">
          <Grid xs={[1, 108, 216]} ys={[19, 128, 236]} zero={344} />
          <path d="M24 346v-24" stroke="#0000c8" /><path d="M8 346h16" stroke="#00a000" />
          <g {...axis}><text x="25" y="322" fill="#0000c8">z</text><text x="0" y="347" fill="#00a000">y</text><text x="25" y="347" fill="#c00000">x</text></g>
          <g transform="translate(-308 -47) scale(.3333)" fill="none" strokeLinejoin="round">
            <path d="M1440 695l-50-15-32-12-13 6-9 50 18 20 10 28-12 30-40 18 8 12 60-2-30 34 10 50 14 34 30-10 40-40M1378 682l12 36h40M1340 726l60-30 34 6M1350 745l80 60-70 20 70 80-60 40M1345 790l90-60M1360 770l70 20-60-50 60 30M1320 830l110-60-70 100 70-90-40 120M1370 945l50-80-72 55 88-20M1400 720v210M1380 760l30 170M1350 900l90-20M1390 790l20 60-60-40 80 70M1410 720l-30 90 50 60M1425 710v190M1350 680l60 60M1240 750l90-3 60 50M1262 875l100-40 60-10M1355 850h80M1365 800l60 100" stroke="#fff" strokeWidth="4" />
            <path d="M1320 832l30 40M1370 855l40 10" stroke="#888" strokeWidth="4" />
            <path d="M1440 697l-50-16-30-13-14 5-8 52-4 6-70 9-26 10v9l90 3 18 15-4 30-20 20-50 30-14 28 84-10 6 4-14 34 14 18 10 18 10 14 30-14 44-40" stroke="#3ff" strokeWidth="7" />
            <path d="M1330 730l30 20M1320 832l60 20" stroke="#3ff" strokeWidth="5" />
          </g>
        </svg>
        <ViewLabel><span>[+]</span><span>[左 ]</span><span>[标准 ]</span><span>[线框 ]</span></ViewLabel>
      </View>
      <View $persp>
        <RightArt width="200" height="100%">
          <g transform="translate(84 -347) scale(.3333)" stroke="#6c6c6c" strokeWidth="3">
            {[1105, 1171, 1219, 1261, 1318, 1342, 1360, 1378, 1390, 1402, 1414].map((y) => <path key={y} d={`M-252 ${y}H348`} />)}
            <path d="M-252 1291H348" stroke="#000" />
            <path d="M78 1112l100-70M78 1278l270-126M78 1358l270-93M78 1408l270-76M195 1413l153-35M300 1418l48-10" />
          </g>
          <ellipse cx="145" cy="37" rx="38" ry="3" stroke="#8e949a" strokeWidth="2" strokeDasharray="9 1" fill="none" />
          <g transform="translate(131 39)" opacity=".85"><rect width="29" height="29" fill="#858585" /><rect x="5" y="5" width="19" height="19" fill="#7d8084" /><path d="M8 8v7M8 18v3M17 8v5M23 8l-4 7M13 20h4" stroke="#5b6066" strokeWidth="2" /></g>
        </RightArt>
      </View>
    </Views>
  );
}

const SliderRow = styled.div`
  display: flex;
  gap: 2px;
  height: 28px;
  padding: 1px 0 2px 1px;
  border-bottom: 1px solid #0c0c0c;
`;
const SliderStep = styled.button`
  width: 22px;
  height: 25px;
  border-radius: 5px;
  background: ${FIELD};
  color: #ddd;
  line-height: 24px;
`;
const SliderHandle = styled(SliderStep)`
  width: 184px;
`;
const TrackBar = styled.div`
  display: flex;
  height: 37px;
`;
const CurveButton = styled.button`
  display: grid;
  place-items: center;
  width: 74px;
  padding: 2px 10px 0 0;
`;
const Ruler = styled.div`
  flex: 1;
  min-width: 0;
  margin-right: 75px;
  background: #282828;
`;

function Timeline() {
  const ticks = Array.from({ length: 101 }, (_, i) => i);
  return (
    <>
      <SliderRow>
        <SliderStep aria-label="上一帧">&lt;</SliderStep>
        <SliderHandle>0 / 100</SliderHandle>
      </SliderRow>
      <TrackBar>
        <CurveButton aria-label="打开迷你曲线编辑器"><Icon w={24} h={18}><path d="M3 1v16" stroke={LIGHT} strokeWidth="5" strokeDasharray="2 1" /><path d="M9 13c4-16 6-15 8-4s4 8 6 2" stroke={CYAN} strokeWidth="2" /></Icon></CurveButton>
        <Ruler>
          <svg width="100%" height="36" overflow="visible">
            <rect x="1" y="1" width="11" height="35" fill="#857a1c" stroke="#222" />
            <svg x="6" width="99%" height="36" overflow="visible">
              {ticks.map((t) => <line key={t} x1={`${t}%`} x2={`${t}%`} y1="0" y2={t % 100 ? 16 : 36} stroke="#777" />)}
            </svg>
            <text x="2" y="32" fontFamily="Noto Sans" fontSize="15" fill="#dcd68c">0</text>
            <text x="100%" dx="7" y="32" textAnchor="end" fontFamily="Noto Sans" fontSize="15" fill="#c8c8c8">100</text>
          </svg>
        </Ruler>
      </TrackBar>
    </>
  );
}

/* ---------- command panel ---------- */

const Command = styled.aside`
  display: flex;
  flex-direction: column;
  flex: none;
  width: 302px;
  padding: 1px 0 0 6px;
`;
const Tabs = styled.div`
  display: flex;
  gap: 1px;
  height: 41px;
`;
const Tab = styled.button<{ $on?: boolean }>`
  display: grid;
  place-items: center;
  width: 47px;
  border-radius: 6px 6px 0 0;
  background: ${(p) => (p.$on ? FACE : "#383838")};
  svg { opacity: ${(p) => (p.$on ? 1 : 0.7)}; }
`;
const CommandBody = styled.div`
  display: flex;
  flex-direction: column;
  flex: 1;
  padding: 11px 3px 0 6px;
  border: solid #383838;
  border-width: 0 0 1px 1px;
  border-radius: 0 0 0 4px;
`;
const NameRow = styled.div`
  display: flex;
  gap: 7px;
  margin-bottom: 14px;
  padding-right: 2px;
`;
const Swatch = styled.button`
  flex: none;
  width: 25px;
  height: 29px;
  border: 1px solid #111;
  background: #ebf2d2;
`;
const StackBox = styled.div`
  height: 128px;
  margin-top: 4px;
  border: 2px solid #fff;
  outline: 1px solid #777;
  outline-offset: -1px;
`;
const StackTools = styled.div`
  display: flex;
  align-items: center;
  height: 34px;
  margin-top: 6px;
`;
const StackSep = styled(Sep)<{ $l?: number; $r?: number }>`
  margin: 0 ${(p) => p.$r ?? 0}px 0 ${(p) => p.$l ?? 0}px;
`;
const StackTool = styled.button<{ $w: number; $on?: boolean }>`
  display: grid;
  place-items: center;
  width: ${(p) => p.$w}px;
  height: 34px;
  border-radius: 5px;
  background: ${(p) => (p.$on ? "#4b5e7a" : "transparent")};
`;
const Divider = styled.div`
  display: flex;
  align-items: center;
  gap: 8px;
  margin: 16px 9px 0 7px;
  &::before, &::after { content: ""; flex: 1; height: 2px; background: #646464; }
`;
const Rail = styled.div`
  display: flex;
  flex-direction: column;
  justify-content: flex-end;
  align-items: flex-end;
  flex: 1;
  margin-top: 5px;
  margin-right: -3px;
`;
const RailTrack = styled.div`
  flex: 1;
  width: 9px;
  margin-right: 3px;
  border-radius: 5px 5px 0 0;
  background: #3b3b3b;
`;

const DK = { fill: "#5a5a5a", stroke: "#2a2a2a" };

function CommandPanel() {
  return (
    <Command>
      <Tabs>
        <Tab aria-label="创建"><Icon w={24} h={24}><path d="M12 0v24M0 12h24" stroke={LIGHT} strokeWidth="4" /></Icon></Tab>
        <Tab $on aria-label="修改"><Icon w={24} h={26}><path d="M3 3h18v20H3z" stroke={CYAN} /><path d="M6 20C7 11 12 7 19 6" stroke="#eee" strokeWidth="2" /><path d="M1 1h4v4H1zM19 1h4v4h-4zM1 21h4v4H1zM19 21h4v4h-4z" fill={FACE} stroke={CYAN} strokeWidth="1.500" /></Icon></Tab>
        <Tab aria-label="层次"><Icon w={22} h={26}><path d="M3 1h16v7H3z" fill={LIGHT} /><path d="M11 8v6M4 21v-7h14v7" stroke={CYAN} strokeWidth="1.500" /><path d="M1 20h5v5H1zM16 20h5v5h-5z" fill={CYAN} /></Icon></Tab>
        <Tab aria-label="运动"><Icon w={28} h={22}><circle cx="18" cy="11" r="10" fill={LIGHT} /><path d="M9 1C-2 4-2 18 9 21M12 1C2 5 2 17 12 21M14 2c-8 5-8 13 0 18" stroke={CYAN} /></Icon></Tab>
        <Tab aria-label="显示"><Icon w={24} h={24}><path d="M0 1h24v15H0zM9 18h6v2h3v3H6v-3h3z" fill={LIGHT} /></Icon></Tab>
        <Tab aria-label="实用程序"><Icon w={26} h={26}><path d="M5 1c5-1 8 3 7 7l12 12c2 3-2 6-4 4L9 12c-4 1-8-1-8-6l4 3 3-3z" fill={LIGHT} /><circle cx="22" cy="22" r="1" fill="#383838" /></Icon></Tab>
      </Tabs>
      <CommandBody>
        <NameRow>
          <Field $dim $h={29} defaultValue="选择了 9 个 对象" aria-label="对象名称" />
          <Swatch aria-label="对象颜色" />
        </NameRow>
        <Stack>
          <Select $h={26} $pad={2} aria-label="修改器列表"><option>修改器列表</option></Select>
          <Down />
        </Stack>
        <StackBox />
        <StackTools>
          <StackTool $w={41} aria-label="锁定堆栈"><Icon w={30} h={30}><path d="M1 28l13-13" stroke="#2a2a2a" strokeWidth="3" /><path d="M1 28l13-13" stroke="#5a5a5a" /><path d="M6 11l5-1 7-6 1-3 10 9-3 2-7 7v6z" {...DK} /></Icon></StackTool>
          <StackSep $h={16} $r={6} />
          <StackTool $w={35} $on aria-label="显示最终结果"><Icon w={14} h={30}><path d="M1 1h12v3H1zM3 4h8v25H3z" fill="#3f4a5c" stroke="#2a3240" /><path d="M5 5h4v22H5z" stroke="#6a7a92" /></Icon></StackTool>
          <StackSep $h={16} $l={7} />
          <StackTool $w={46} aria-label="使唯一"><Icon w={30} h={30}><path d="M14 4h11v10h4l-6 7-6-7h4V9h-7z" {...DK} fill={FACE} /><circle cx="8" cy="7" r="7" {...DK} /><circle cx="22" cy="22" r="7" {...DK} fill={FACE} /><circle cx="15" cy="22" r="7" {...DK} fill={FACE} /></Icon></StackTool>
          <StackTool $w={28} aria-label="移除修改器"><Icon w={22} h={30}><path d="M1 4h20v3H1zM7 1h8v3H7zM2 8h18v21H2z" {...DK} /><path d="M7 11v14M11 11v14M15 11v14" stroke="#222" strokeWidth="3" /></Icon></StackTool>
          <StackSep $h={16} $l={9} />
          <StackTool $w={46} aria-label="配置修改器集"><Icon w={32} h={30}><path d="M3 1h22v28H3z" fill={LIGHT} /><path d="M5 5h18" stroke={INK} strokeWidth="2" /><path d="M5 9h7v7H5zM15 9h7v7h-7zM5 19h7v7H5zM15 19h7v7h-7z" stroke={INK} /><path d="M14 17l3-6L28 0l4 3-12 12z" fill="#f9a50d" stroke={FACE} /></Icon></StackTool>
        </StackTools>
        <Divider><Icon w={26} h={7}><path d="M0 1.500h26" stroke="#ddd" strokeWidth="2" strokeDasharray="2 2" /><path d="M2 5.500h24" stroke="#ddd" strokeWidth="2" strokeDasharray="2 2" /></Icon></Divider>
        <Rail>
          <RailTrack />
          <Icon w={14} h={88}>
            <path d="M1 1h12v86H1z" fill="#34414d" stroke="#222b34" strokeWidth="2" />
            <path d="M5 7h5v76H5z" fill="#22262d" />
            <path d="M7.500 26v14" stroke="#b8a51c" strokeWidth="3" strokeDasharray="2 1" />
            <path d="M7.500 41v11" stroke="#6fae56" strokeWidth="3" strokeDasharray="2 1" />
            <path d="M7.500 53v30" stroke="#2291c4" strokeWidth="3" strokeDasharray="2 1" />
          </Icon>
        </Rail>
      </CommandBody>
    </Command>
  );
}

/* ---------- status bar ---------- */

const Status = styled.footer`
  display: flex;
  height: 74px;
  padding-top: 2px;
`;
const Script = styled.div`
  display: flex;
  flex-direction: column;
  gap: 1px;
  width: 147px;
  flex: none;
`;
const ScriptLine = styled.div<{ $pink?: boolean }>`
  height: 35px;
  padding-left: 5px;
  overflow: hidden;
  border: 1px solid #fff;
  border-top: 2px solid #666;
  border-left: 0;
  background: ${(p) => (p.$pink ? "#dcc4c4" : "#fff")};
  color: #111;
  font-family: "Liberation Mono", "Noto Sans CJK SC", monospace;
  font-size: 15px;
  line-height: 22px;
`;
const Han = styled.span`
  font-size: 18px;
`;
const Prompt = styled.div`
  display: flex;
  flex-direction: column;
  justify-content: space-around;
  flex: 1;
  min-width: 0;
  margin-left: 5px;
  padding: 2px 0 0 4px;
  border-left: 1px solid #111;
  color: #f0f0f0;
`;
const Coords = styled.div`
  flex: none;
  width: 654px;
`;
const Line = styled.div<{ $h?: number; $pad?: number }>`
  display: flex;
  align-items: center;
  height: ${(p) => p.$h ?? 36}px;
  padding-left: ${(p) => p.$pad ?? 0}px;
`;
const Small = styled.button<{ $w: number }>`
  display: grid;
  place-items: center;
  flex: none;
  width: ${(p) => p.$w}px;
  height: 32px;
`;
const CoordLabel = styled.label`
  display: flex;
  align-items: center;
  width: 106px;
  margin-right: 19px;
  color: #fff;
  span { flex: none; width: 18px; }
`;
const GridText = styled.output`
  padding-left: 2px;
  color: #fff;
`;
const TagButton = styled.button`
  display: grid;
  place-items: center;
  width: 32px;
  height: 31px;
  margin: 0 8px 0 2px;
  border-radius: 4px;
  background: #5d8ac3;
`;
const Keys = styled.div`
  display: flex;
  align-items: flex-start;
  gap: 5px;
  flex: none;
  width: 353px;
  padding-top: 2px;
`;
const KeyButton = styled(PushButton)`
  width: 61px;
  height: 67px;
  flex: none;
`;
const KeyColumn = styled.div<{ $w: number }>`
  display: flex;
  flex-direction: column;
  gap: 2px;
  width: ${(p) => p.$w}px;
  > button { height: 31px; }
`;
const FilterLine = styled.div`
  display: flex;
  align-items: center;
  gap: 5px;
  margin-top: 5px;
  > button:last-child { flex: 1; margin-right: 2px; }
`;
const Player = styled.div`
  flex: none;
  width: 333px;
`;
const Nav = styled.div`
  display: flex;
  margin-left: auto;
  padding-right: 8px;
`;

function StatusBar() {
  return (
    <Status>
      <Script>
        <ScriptLine $pink>actionMan.execu</ScriptLine>
        <ScriptLine><Han>欢迎使用</Han> MAXScr</ScriptLine>
      </Script>
      <Prompt><span>选择了 9 个 对象</span><span>单击并拖动以选择并移动对象</span></Prompt>
      <Coords>
        <Line>
          <Small $w={40} aria-label="孤立当前选择"><Icon w={22} h={23}><path d="M6 6h10v11H6z" fill={CYAN} /><path d="M1 5V1h4M17 1h4v4M1 18v4h4M17 22h4v-4" stroke={LIGHT} strokeWidth="1.500" /></Icon></Small>
          <Small $w={40} aria-label="选择锁定"><Icon w={16} h={22}><path d="M4 10V5c0-5 8-5 8 0v5" stroke={LIGHT} strokeWidth="2.500" /><path d="M1 9h14v12H1z" fill={LIGHT} /><path d="M8 13v5" stroke="#222" strokeWidth="3" /></Icon></Small>
          <Small $w={43} aria-label="绝对模式变换输入"><Icon w={22} h={22}><path d="M2 2h18v18H2zM11 2v5M11 15v5M2 11h5M15 11h5" stroke={LIGHT} strokeWidth="2.500" /><circle cx="11" cy="11" r="3.500" stroke={LIGHT} strokeWidth="2" /></Icon></Small>
          {["X", "Y", "Z"].map((a) => <CoordLabel key={a}><span>{a}:</span><Field $h={27} /></CoordLabel>)}
          <GridText>栅格 = 10.0</GridText>
        </Line>
        <Line $pad={461}>
          <Sep />
          <TagButton aria-label="时间标记"><Icon w={20} h={22}><path d="M10 2l8 4v10l-8 4-8-4V6zM2 6l8 4 8-4M10 10v10M2 16l8-4 8 4" stroke={INK} strokeWidth="3" /><path d="M10 2l8 4v10l-8 4-8-4V6zM2 6l8 4 8-4M10 10v10M2 16l8-4 8 4" stroke={LIGHT} /></Icon></TagButton>
          <span>添加时间标记</span>
        </Line>
      </Coords>
      <Keys>
        <KeyButton aria-label="设置关键点"><Icon w={42} h={44}><path d="M16 2h8v16h14v8H24v14h-8V26H2v-8h14z" fill={LIGHT} stroke={INK} /><path d="M28 34L41 24M36 27l3 4M39 24l3 3" stroke={CYAN} strokeWidth="3" /><circle cx="26" cy="36" r="4" stroke={CYAN} strokeWidth="3" /></Icon></KeyButton>
        <KeyColumn $w={98}><PushButton>自动</PushButton><PushButton>设置关键点</PushButton></KeyColumn>
        <KeyColumn $w={167}>
          <Stack><Select $h={26} $pad={6} aria-label="关键点对象"><option>选定对象</option></Select><Down /></Stack>
          <FilterLine>
            <Small $w={32} aria-label="切线"><Icon w={28} h={28}><path d="M3 3c2 13 10 19 18 20" stroke={CYAN} strokeWidth="2" /><path d="M1 1h5v5H1z" fill={INK} stroke={LIGHT} /><path d="M27 21v6h-6z" fill="#e4e4e4" /></Icon></Small>
            <PushButton>过滤器...</PushButton>
          </FilterLine>
        </KeyColumn>
      </Keys>
      <Player>
        <Line>
          <Small $w={38} aria-label="转至开头"><Icon w={23} h={18}><path d="M0 0h4v18H0zM14 2v13L6 9zM23 2v13L15 9z" fill={LIGHT} /></Icon></Small>
          <Sep />
          <Small $w={35} aria-label="上一帧"><Icon w={22} h={18}><path d="M10 2v14L0 9zM12 0h4v18h-4zM18 0h4v18h-4z" fill={LIGHT} /></Icon></Small>
          <Small $w={35} aria-label="播放"><Icon w={26} h={28}><path d="M4 2l19 11L4 24z" fill="#dadada" /><path d="M26 22v6h-6z" fill="#e4e4e4" /></Icon></Small>
          <Small $w={35} aria-label="下一帧"><Icon w={22} h={18}><path d="M12 2v14l10-7zM0 0h4v18H0zM6 0h4v18H6z" fill={LIGHT} /></Icon></Small>
          <Sep />
          <Small $w={36} aria-label="转至结尾"><Icon w={23} h={18}><path d="M19 0h4v18h-4zM0 2v13l8-6zM9 2v13l8-6z" fill={LIGHT} /></Icon></Small>
          <Nav>
            <Small $w={34} aria-label="缩放"><Icon w={22} h={22}><circle cx="13" cy="8" r="6.500" stroke={LIGHT} strokeWidth="2.500" /><path d="M8 13l-6 7" stroke={LIGHT} strokeWidth="3" /></Icon></Small>
            <Small $w={34} aria-label="缩放所有视图"><Icon w={22} h={22}><path d="M6 1h7v7H6zM14 1h7v7h-7zM14 9h7v7h-7zM6 9h7v7H6z" fill={CYAN} /><circle cx="10" cy="11" r="4.500" stroke={LIGHT} strokeWidth="2" /><path d="M7 15l-5 5" stroke={LIGHT} strokeWidth="3" /></Icon></Small>
            <Small $w={34} aria-label="最大化显示"><Icon w={26} h={26}><path d="M3 5V2h4M17 2h4v4M3 17v4h4M17 21h3" stroke={LIGHT} strokeWidth="1.500" /><path d="M12 4l7 4v8l-7 4-7-4V8z" fill={CYAN} /><path d="M5 8l7 4 7-4M12 12v8" stroke={INK} /><path d="M26 20v6h-6z" fill="#e4e4e4" /></Icon></Small>
            <Small $w={34} aria-label="所有视图最大化"><Icon w={26} h={26}><path d="M10 5l6-4 5 3v11l-5 3-6-3z" fill={CYAN} /><path d="M10 5l5 3 6-4M15 8v9" stroke={INK} /><path d="M0 14l4-2 4 2-4 3zM5 18l5-2 4 2-5 3zM6 12l3-2v4z" fill={LIGHT} /><path d="M26 20v6h-6z" fill="#e4e4e4" /></Icon></Small>
          </Nav>
        </Line>
        <Line $h={30}>
          <Small $w={38} aria-label="关键点模式"><Icon w={22} h={13}><path d="M9 1v12L0 7zM13 1v12l9-6z" fill={LIGHT} /></Icon></Small>
          <Sep />
          <Stack $w={107}>
            <Field $h={27} defaultValue="0" aria-label="当前帧" />
            <Icon w={16} h={16}><path d="M5 0l5 6H0zM0 9h10l-5 6z" fill={LIGHT} /></Icon>
          </Stack>
          <Sep />
          <Small $w={34} aria-label="时间配置"><Icon w={24} h={24}><circle cx="10" cy="10" r="9" fill={LIGHT} /><path d="M9 4v7h5" stroke={INK} strokeWidth="2" /><circle cx="17" cy="17" r="4" stroke={ORANGE} strokeWidth="3" fill={FACE} /><path d="M17 10v14M10 17h14M12 12l10 10M22 12L12 22" stroke={ORANGE} strokeWidth="2" strokeDasharray="3 8" /></Icon></Small>
          <Nav>
            <Small $w={34} aria-label="缩放区域"><Icon w={24} h={24}><path d="M1 2h21v14H1z" stroke={LIGHT} strokeWidth="2" strokeDasharray="4 2" /><circle cx="10" cy="14" r="4" stroke={CYAN} strokeWidth="2" fill={FACE} /><path d="M7 17l-5 6" stroke={CYAN} strokeWidth="2.500" /></Icon></Small>
            <Small $w={34} aria-label="平移视图"><Icon w={26} h={26}><path d="M7 14V5h2v7h1V3h2v8h1V3h2v9h1V5h2v14l-4 4H9l-6-9 2-2z" fill={LIGHT} stroke={LIGHT} /><path d="M26 20v6h-6z" fill="#e4e4e4" /></Icon></Small>
            <Small $w={34} aria-label="环绕"><Icon w={26} h={26}><circle cx="12" cy="11" r="9" fill={LIGHT} /><path d="M12 2a9 9 0 0 0-9 9h9z" fill={CYAN} /><path d="M1 21C-1 15 20-2 23 3c1 5-17 21-22 18z" stroke={INK} strokeWidth="3" /><path d="M1 21C-1 15 20-2 23 3c1 5-17 21-22 18z" stroke={LIGHT} strokeWidth="1.500" /><path d="M26 20v6h-6z" fill="#e4e4e4" /></Icon></Small>
            <Small $w={34} aria-label="最大化视口"><Icon w={20} h={20}><path d="M0 0h20v20H0z" fill={LIGHT} /><path d="M2 11h8v8H2z" stroke={INK} /><path d="M8 12l9-9M10 3h7v7" stroke={INK} strokeWidth="2" /></Icon></Small>
          </Nav>
        </Line>
      </Player>
    </Status>
  );
}

/* ---------- import dialog ---------- */

const Dialog = styled.section`
  position: absolute;
  z-index: 2;
  top: 18px;
  right: 394px;
  bottom: 70px;
  left: 475px;
  display: flex;
  flex-direction: column;
  border: 1px solid #1883d7;
  background: ${FACE};
`;
const DialogTitle = styled.header`
  display: flex;
  align-items: center;
  gap: 5px;
  height: 44px;
  padding: 0 9px 2px 11px;
  background: #fff;
  color: #000;
  h2 { flex: 1; margin: 0; font-size: 18px; font-weight: 400; }
`;
const CloseButton = styled.button`
  display: grid;
  place-items: center;
  width: 30px;
  height: 30px;
`;
const PathRow = styled.div<{ $top: number; $h: number }>`
  display: flex;
  align-items: center;
  height: ${(p) => p.$h}px;
  margin: ${(p) => p.$top}px 15px 0 9px;
`;
const PathLabel = styled.label`
  flex: none;
  width: 141px;
  padding-left: 22px;
  text-align: center;
  color: #f2f2f2;
  font-size: 16px;
`;
const LookStack = styled(Stack)`
  > svg:first-of-type { justify-self: start; margin-left: 6px; z-index: 1; }
`;
const LookSelect = styled(Select)`
  border: 0;
  border-right: 21px solid ${FIELD};
  background: #fff;
  color: #000;
`;
const DialogTools = styled.div`
  display: flex;
  margin-left: 18px;
`;
const DialogContent = styled.div`
  display: flex;
  flex: 1;
  margin: 7px 14px 8px 9px;
  gap: 7px;
`;
const Places = styled.nav`
  flex: none;
  width: 133px;
  padding-top: 9px;
  background: #f3f3f3;
`;
const Place = styled.a`
  display: grid;
  grid-template-rows: 44px 27px;
  justify-items: center;
  align-items: center;
  height: 85px;
  color: #000;
  font-size: 18px;
  text-decoration: none;
`;
const Browser = styled.div`
  display: flex;
  flex-direction: column;
  flex: 1;
  min-width: 0;
  padding-top: 7px;
`;
const ListArea = styled.div`
  display: grid;
  flex: 1;
  background: #fff;
`;
const Files = styled.table`
  width: 100%;
  height: 100%;
  table-layout: fixed;
  border-spacing: 0;
  color: #000;
  font-size: 18px;
  th, td {
    padding: 0 0 0 6px;
    overflow: hidden;
    border-right: 1px solid #e5f1fb;
    font-weight: 400;
    text-align: left;
  }
  th:last-child, td:last-child { border-right: 0; }
`;
const HeadRow = styled.tr`
  height: 30px;
`;
const FileRow = styled.tr`
  height: 28px;
  td { background: #cce8ff; background-clip: padding-box; }
  td:first-child { padding-left: 3px; border-left: 4px solid #fff; }
  td + td { border-right-color: #b8dcf8; }
`;
const NameHead = styled.span`
  display: grid;
  grid-template-columns: 1fr auto 1fr;
  height: 28px;
  padding-right: 6px;
  line-height: 30px;
`;
const FileName = styled.span`
  display: flex;
  align-items: center;
  gap: 2px;
`;
const Footer = styled.div`
  display: grid;
  grid-template-columns: 144px 1fr 133px;
  grid-auto-rows: 32px;
  row-gap: 8px;
  align-items: center;
  padding: 14px 1px 24px 0;
  color: #f2f2f2;
  label { padding: 2px 0 0 2px; }
  > div { margin-right: 32px; }
`;
const TopStack = styled(Stack)`
  align-self: start;
`;

const places: [string, React.ReactNode][] = [
  ["快速访问", <Icon w={44} h={36}><path d="M8 2h20M10 5h14M12 8h12M2 23h14M0 28h12M4 19h10" stroke="#7fbff0" /><path d="M30 1v13l13 1-11 8-2 13-9-7-13 7 4-13-5-10 13 1z" fill="#27a3f5" stroke="#1579c4" /></Icon>],
  ["桌面", <Icon w={42} h={30}><path d="M.5.5h41v29H.5z" fill="#1098f7" stroke="#0070ba" /><path d="M1 1h25L11 28H1z" fill="#2fa9ff" /><path d="M1 28.500h40" stroke="#045a96" /><path d="M36 28.500h5" stroke="#fff" strokeDasharray="1 1" /></Icon>],
  ["库", <Icon w={42} h={36}><path d="M0 0h17l4 3h21v31H0z" fill="#ffe693" /><path d="M0 0h16l4 3-4 3H0z" fill="#fdcb30" /><path d="M3 3h10" stroke="#fff" strokeWidth="2" /><path d="M3 3h2" stroke="#3bb3e6" strokeWidth="2" /><path d="M7 36V19q0-2 2-2h24q2 0 2 2v17h-7V24H14v12z" fill="#3bb3e6" /></Icon>],
  ["此电脑", <Icon w={44} h={42}><path d="M12 1l30 9v20l-30-9z" fill="#3aa9f5" stroke="#58606a" strokeWidth="1.500" /><path d="M13 2l18 6-18 13z" fill="#6cc3fb" /><path d="M26 26l4 1v3l7 2-8 2-9-3 6-2z" fill="#b8bec5" /><path d="M1 33l9-4 24 8-10 4z" fill="#e4e6e9" stroke="#8b9299" strokeDasharray="2 1" /><path d="M5 33l20 6M8 31l20 6" stroke="#a9afb5" strokeDasharray="2 1" /></Icon>],
  ["网络", <Icon w={42} h={42}><circle cx="26" cy="16" r="15" fill="#3c8cb9" /><path d="M14 8c6-8 12-7 14-5l-3 7-6 1-3 7-4-2zM33 4c5 3 8 9 8 13l-4 4-3-6z" fill="#c5e3ef" /><path d="M1 12l28 8v19L1 31z" fill="#2fa4f4" stroke="#59636d" strokeWidth="1.500" /><path d="M2 13l20 7L2 30z" fill="#63bdfa" /><path d="M13 35l4 1v2l7 2-8 2-9-3 6-2z" fill="#b8bec5" /></Icon>],
];

const FolderY = () => <path d="M1 2h8l2 3h11l-2 16H1z" fill="#f7e776" stroke="#b5981b" />;

const Grips = styled.div`
  display: flex;
  justify-content: flex-end;
  height: 12px;
  margin-top: -12px;
`;

function ImportDialog() {
  return (
    <Dialog role="dialog" aria-label="选择要导入的文件">
      <DialogTitle>
        <svg width="24" height="24" viewBox="0 0 24 24"><rect width="24" height="24" fill="#cfe9ea" /><text x="5" y="17" fontFamily="Noto Sans" fontWeight="900" fontSize="19" fill="#0f8084">3</text><text x="12" y="23" fontFamily="Open Sans" fontWeight="800" fontSize="5" fill="#0f8084">MAX</text></svg>
        <h2>选择要导入的文件</h2>
        <CloseButton aria-label="关闭对话框"><Icon w={16} h={16}><path d="M1 1l14 14M15 1L1 15" stroke="#000" /></Icon></CloseButton>
      </DialogTitle>
      <PathRow $top={11} $h={25}>
        <PathLabel htmlFor="history">历史记录:</PathLabel>
        <Stack $grow>
          <Select id="history" $h={27} $pad={8}><option>C:\Users\zzzz\Desktop\3Dmax\6527_1504290720_65258.obj</option></Select>
          <Down />
        </Stack>
      </PathRow>
      <PathRow $top={24} $h={28}>
        <PathLabel htmlFor="look">查找范围(<u>I</u>):</PathLabel>
        <LookStack $w={390}>
          <LookSelect id="look" $h={29} $pad={31}><option>6541_1602181130_31717.obj</option></LookSelect>
          <Icon w={15} h={22}><path d="M5 0h10v19H5z" fill="#f4cf6b" /><path d="M0 0l6 3v19l-6-3z" fill="#fbe6a4" /></Icon>
          <Down pad={9} />
        </LookStack>
        <DialogTools>
          <Small $w={30} aria-label="后退"><Icon w={14} h={14}><path d="M0 7l7-7v4h7v6H7v4z" fill={LIGHT} /></Icon></Small>
          <Small $w={32} aria-label="上一级"><Icon w={24} h={22}><FolderY /><path d="M8 17c5 3 9-2 6-10l-3 1 3-7 6 5-3 1c3 9-2 15-9 10z" fill="#3fb530" stroke="#1f7a18" /></Icon></Small>
          <Small $w={31} aria-label="新建文件夹"><Icon w={24} h={22}><FolderY /><path d="M17 10v12M11 16h12" stroke="#e8210c" strokeWidth="2.500" /></Icon></Small>
          <Small $w={30} aria-label="视图"><Icon w={24} h={21}><path d="M.5.5h23v20H.5z" fill="#fff" stroke="#0a4d9e" /><path d="M1 1h22v4H1z" fill="#0f68d0" /><path d="M4 10h3" stroke="#8888c8" strokeWidth="3" /><path d="M10 10h4" stroke="#1258cf" strokeWidth="3" /><path d="M17 10h3" stroke="#2cae2c" strokeWidth="3" /><path d="M4 16h3" stroke="#f05510" strokeWidth="3" /><path d="M10 16h4" stroke="#00008b" strokeWidth="3" /><path d="M17 16h3" stroke="#c87a00" strokeWidth="3" /></Icon></Small>
          <Icon w={11} h={32}><path d="M0 13h11l-5.500 6z" fill="#000" /></Icon>
        </DialogTools>
      </PathRow>
      <DialogContent>
        <Places>
          {places.map(([n, i]) => <Place key={n} href="#">{i}<span>{n}</span></Place>)}
        </Places>
        <Browser>
          <ListArea>
            <Files>
              <colgroup><col /><col width="203" /><col width="204" /><col width="21" /></colgroup>
              <thead>
                <HeadRow>
                  <th><NameHead><span>名称</span><Icon w={12} h={8}><path d="M1 7l5-5 5 5" stroke="#777" /></Icon><span /></NameHead></th>
                  <th>修改日期</th><th>类型</th><th>大小</th>
                </HeadRow>
              </thead>
              <tbody>
                <FileRow>
                  <td><FileName>
                    <Icon w={25} h={22}><path d="M1 5l6-4h17v15H1z" fill="#3aa3ea" /><path d="M1 5l6-4h6L5 12H1z" fill="#79c6f5" /><path d="M1 15h23v3H1z" fill="#f5a21c" /><path d="M1 18h23v3H1z" fill="#8bc34a" /><path d="M16 0h5v22h-5z" fill="#6b3a1b" /><path d="M15 12h7v4h-7z" stroke="#f2d38a" /></Icon>
                    file.obj
                  </FileName></td>
                  <td>2016/2/17 21:37</td><td>360压缩</td><td />
                </FileRow>
                <tr><td /><td /><td /><td /></tr>
              </tbody>
            </Files>
          </ListArea>
          <Scroll share={89} />
          <Footer>
            <label htmlFor="fname">文件名(<u>N</u>):</label>
            <TopStack><Field id="fname" $h={28} defaultValue="file.obj" /><Down /></TopStack>
            <PushButton>打开(<u>O</u>)</PushButton>
            <label htmlFor="ftype">文件类型(<u>T</u>):</label>
            <Stack><Select id="ftype" $h={26} $pad={6}><option>所有格式</option></Select><Down /></Stack>
            <PushButton>取消</PushButton>
          </Footer>
        </Browser>
      </DialogContent>
      <Grips><Icon w={12} h={12}><path d="M9 0h2v2H9zM5 4h2v2H5zM9 4h2v2H9zM1 8h2v2H1zM5 8h2v2H5zM9 8h2v2H9z" fill="#0a0a0a" /></Icon></Grips>
    </Dialog>
  );
}

export default function App() {
  return (
    <Shell>
      <Global />
      <Title />
      <MenuBar>
        {["编辑(E)", "工具(T)", "组(G)", "视图(V)", "创建(C)"].map((m) => <span key={m}>{m}</span>)}
      </MenuBar>
      <MainToolbar />
      <RibbonTabs>
        <RibbonTab $on $w={82}>建模</RibbonTab>
        <RibbonTab $w={148}>自由形式</RibbonTab>
        <RibbonTab $w={99}>选择</RibbonTab>
        <RibbonTab $w={149}>对象绘制</RibbonTab>
      </RibbonTabs>
      <RibbonPanel><RibbonButton>多边形建模</RibbonButton></RibbonPanel>
      <Main>
        <Strip>
          <PlayBtn aria-label="展开"><Icon w={10} h={14}><path d="M1 1l8 6-8 6z" fill="#ddd" /></Icon></PlayBtn>
          <LayoutBtn aria-label="视口布局"><Icon w={48} h={42}>
            {[[1, 1], [25, 1], [1, 22], [25, 22]].map(([x, y]) => <rect key={`${x}-${y}`} x={x} y={y} width="22" height="19" rx="2" fill="#5d6b80" stroke="#1e2c42" strokeWidth="1.500" />)}
          </Icon></LayoutBtn>
        </Strip>
        <SceneExplorer />
        <Center><Viewports /><Timeline /></Center>
        <CommandPanel />
      </Main>
      <StatusBar />
      <ImportDialog />
    </Shell>
  );
}
